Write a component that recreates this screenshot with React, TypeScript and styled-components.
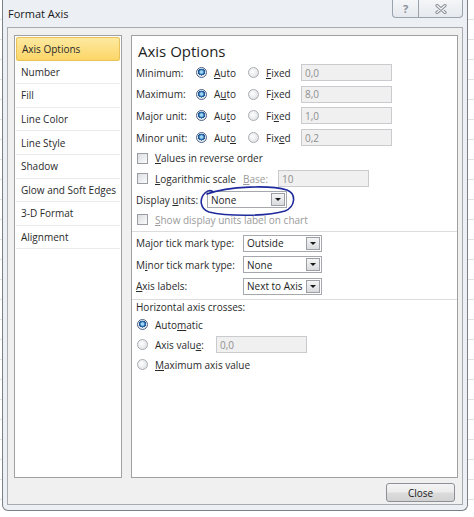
import styled, { createGlobalStyle } from "styled-components";

const GlobalStyle = createGlobalStyle`
  html, body {
    margin: 0;
    padding: 0;
    background: #ffffff;
    font-family: "Open Sans", "Noto Sans", sans-serif;
  }
  #root {
    width: 474px;
    height: 517px;
    overflow: hidden;
    background: repeating-linear-gradient(180deg, #ffffff 0 19px, #dde2e8 19px 20px);
  }
`;

const Dialog = styled.div`
  width: 466px;
  height: 511px;
  margin-left: 2px;
  background: #eceff3;
  border: 1px solid #7a8088;
  border-top: none;
  border-radius: 0 0 6px 6px;
  display: flex;
  flex-direction: column;
  box-sizing: border-box;
  position: relative;
`;

const TitleBar = styled.div`
  height: 27px;
  display: flex;
  align-items: flex-start;
  justify-content: space-between;
  padding-left: 5px;
`;

const Title = styled.span`
  font-size: 11px;
  color: #1a1a1a;
  margin-top: 6px;
`;

const CaptionButtons = styled.div`
  display: flex;
  margin-right: 4px;
  height: 17px;
  border: 1px solid #9aa2ac;
  border-top: none;
  border-radius: 0 0 4px 4px;
  background: linear-gradient(#f4f6f8, #e6e9ee);
`;

const CaptionButton = styled.div<{ $w: number; $last?: boolean }>`
  width: ${({ $w }) => $w}px;
  display: flex;
  align-items: center;
  justify-content: center;
  border-right: ${({ $last }) => ($last ? "none" : "1px solid #9aa2ac")};
  color: #8a8f96;
  font-size: 11px;
  font-weight: 700;
`;

const Client = styled.div`
  flex: 1;
  margin: 0 4px 5px 4px;
  background: #f0f0f0;
  border: 1px solid #a7abb0;
  display: flex;
  flex-direction: column;
  padding: 7px 4px 0 6px;
`;

const Panels = styled.div`
  display: flex;
  gap: 9px;
  height: 443px;
`;

const NavList = styled.div`
  width: 108px;
  background: #ffffff;
  border: 1px solid #a0a0a0;
  box-sizing: border-box;
  padding: 1px;
  display: flex;
  flex-direction: column;
`;

const NavItem = styled.div<{ $selected?: boolean }>`
  height: 23.6px;
  box-sizing: border-box;
  display: flex;
  align-items: center;
  padding-left: 5px;
  font-size: 10px;
  color: #2a2a2a;
  border-bottom: 1px solid ${({ $selected }) => ($selected ? "transparent" : "#ececec")};
  ${({ $selected }) =>
    $selected &&
    `
    background: linear-gradient(#fde9a0, #fcd667);
    border: 1px solid #eac25a;
    border-radius: 2px;
  `}
`;

const OptionsPanel = styled.div`
  width: 327px;
  background: #ffffff;
  border: 1px solid #a0a0a0;
  box-sizing: border-box;
  padding: 4px 0 0 4px;
  display: flex;
  flex-direction: column;
  position: relative;
  font-size: 10px;
  color: #2a2a2a;
`;

const Heading = styled.div`
  font-size: 15px;
  color: #1e1e1e;
  height: 22px;
  padding-left: 2px;
  display: flex;
  align-items: center;
`;

const Row = styled.div<{ $h: number; $indent?: number }>`
  height: ${({ $h }) => $h}px;
  display: flex;
  align-items: center;
  padding-left: ${({ $indent }) => $indent ?? 0}px;
`;

const Label = styled.span<{ $w?: number; $disabled?: boolean }>`
  display: inline-block;
  width: ${({ $w }) => ($w ? `${$w}px` : "auto")};
  flex: none;
  white-space: nowrap;
  color: ${({ $disabled }) => ($disabled ? "#9a9a9a" : "#2a2a2a")};
`;

const Key = styled.span`
  text-decoration: underline;
  text-underline-offset: 1px;
`;

const Radio = styled.span<{ $on?: boolean }>`
  width: 11px;
  height: 11px;
  flex: none;
  border-radius: 50%;
  box-sizing: border-box;
  border: 1px solid ${({ $on }) => ($on ? "#4d6185" : "#a9acb2")};
  background: ${({ $on }) =>
    $on
      ? "radial-gradient(circle at 50% 45%, #9fd4f5 0 1.2px, #2a6fb0 2.4px, #1b4f8c 3.4px, #e9ecf0 3.6px)"
      : "radial-gradient(circle at 40% 40%, #ffffff, #d8dade)"};
  margin-right: 7px;
`;

const Checkbox = styled.span`
  width: 11px;
  height: 11px;
  flex: none;
  box-sizing: border-box;
  border: 1px solid #9a9ea4;
  background: linear-gradient(135deg, #dcdee2, #fbfbfb);
  margin-right: 7px;
`;

const TextBox = styled.div<{ $w: number }>`
  width: ${({ $w }) => $w}px;
  height: 17px;
  box-sizing: border-box;
  border: 1px solid #c9cbce;
  background: #f0f0f0;
  color: #8f8f8f;
  display: flex;
  align-items: center;
  padding-left: 3px;
  flex: none;
`;

const Select = styled.div<{ $w: number }>`
  width: ${({ $w }) => $w}px;
  height: 17px;
  box-sizing: border-box;
  border: 1px solid #a5a8ad;
  background: #ffffff;
  display: flex;
  align-items: stretch;
  flex: none;
`;

const SelectText = styled.span`
  flex: 1;
  display: flex;
  align-items: center;
  padding-left: 3px;
  color: #1e1e1e;
  white-space: nowrap;
`;

const SelectButton = styled.span`
  width: 14px;
  margin: 1px;
  box-sizing: border-box;
  border: 1px solid #9ca0a6;
  background: linear-gradient(#f5f5f5, #d9dbde);
  display: flex;
  align-items: center;
  justify-content: center;
  &::after {
    content: "";
    border-left: 3px solid transparent;
    border-right: 3px solid transparent;
    border-top: 3px solid #1a1a1a;
  }
`;

const Separator = styled.div`
  height: 1px;
  flex: none;
  background: #dcdcdc;
  margin: 2px 0 0 -4px;
`;

const Footer = styled.div`
  flex: 1;
  display: flex;
  justify-content: flex-end;
  align-items: flex-start;
  padding-top: 5px;
  padding-right: 3px;
`;

const CloseButton = styled.div`
  width: 69px;
  height: 19px;
  box-sizing: border-box;
  border: 1px solid #8d9197;
  border-radius: 3px;
  background: linear-gradient(#f4f4f4 0%, #ececec 48%, #dcdcdc 52%, #d2d2d2 100%);
  display: flex;
  align-items: center;
  justify-content: center;
  font-size: 10px;
  color: #1a1a1a;
`;

const Scribble = styled.svg`
  position: absolute;
  left: 67px;
  top: 149px;
  pointer-events: none;
`;

const navItems = [
  "Axis Options",
  "Number",
  "Fill",
  "Line Color",
  "Line Style",
  "Shadow",
  "Glow and Soft Edges",
  "3-D Format",
  "Alignment",
];

const unitRows = [
  { label: "Minimum:", pre: "", key: "A", post: "uto", fpre: "", fkey: "F", fpost: "ixed", value: "0,0" },
  { label: "Maximum:", pre: "A", key: "u", post: "to", fpre: "F", fkey: "i", fpost: "xed", value: "8,0" },
  { label: "Major unit:", pre: "Au", key: "t", post: "o", fpre: "Fi", fkey: "x", fpost: "ed", value: "1,0" },
  { label: "Minor unit:", pre: "Aut", key: "o", post: "", fpre: "Fix", fkey: "e", fpost: "d", value: "0,2" },
];

function CloseGlyph() {
  return (
    <svg width="12" height="10" viewBox="0 0 12 10">
      <path d="M2 1.5 L10 8.5 M10 1.5 L2 8.5" stroke="#8a8f96" strokeWidth="3.2" strokeLinecap="round" />
      <path d="M2 1.5 L10 8.5 M10 1.5 L2 8.5" stroke="#f4f6f8" strokeWidth="1.2" strokeLinecap="round" />
    </svg>
  );
}

export default function App() {
  return (
    <>
      <GlobalStyle />
      <Dialog>
        <TitleBar>
          <Title>Format Axis</Title>
          <CaptionButtons>
            <CaptionButton $w={25}>?</CaptionButton>
            <CaptionButton $w={43} $last>
              <CloseGlyph />
            </CaptionButton>
          </CaptionButtons>
        </TitleBar>
        <Client>
          <Panels>
            <NavList>
              {navItems.map((item, i) => (
                <NavItem key={item} $selected={i === 0}>
                  {item}
                </NavItem>
              ))}
            </NavList>
            <OptionsPanel>
              <Heading>Axis Options</Heading>
              {unitRows.map((r) => (
                <Row key={r.label} $h={21.6}>
                  <Label $w={60}>{r.label}</Label>
                  <Radio $on />
                  <Label $w={34}>
                    {r.pre}
                    <Key>{r.key}</Key>
                    {r.post}
                  </Label>
                  <Radio />
                  <Label $w={35}>
                    {r.fpre}
                    <Key>{r.fkey}</Key>
                    {r.fpost}
                  </Label>
                  <TextBox $w={91}>{r.value}</TextBox>
                </Row>
              ))}
              <Row $h={20} $indent={1}>
                <Checkbox />
                <Label>
                  <Key>V</Key>alues in reverse order
                </Label>
              </Row>
              <Row $h={21} $indent={1}>
                <Checkbox />
                <Label $w={88}>
                  <Key>L</Key>ogarithmic scale
                </Label>
                <Label $w={35} $disabled>
                  <Key>B</Key>ase:
                </Label>
                <TextBox $w={91}>10</TextBox>
              </Row>
              <Row $h={21}>
                <Label $w={71}>
                  Display <Key>u</Key>nits:
                </Label>
                <Select $w={80}>
                  <SelectText>None</SelectText>
                  <SelectButton />
                </Select>
              </Row>
              <Row $h={19} $indent={1}>
                <Checkbox />
                <Label $disabled>
                  <Key>S</Key>how display units label on chart
                </Label>
              </Row>
              <Separator />
              <Row $h={21.5}>
                <Label $w={107}>Major tick mark type:</Label>
                <Select $w={79}>
                  <SelectText>Outside</SelectText>
                  <SelectButton />
                </Select>
              </Row>
              <Row $h={21.5}>
                <Label $w={107}>
                  M<Key>i</Key>nor tick mark type:
                </Label>
                <Select $w={79}>
                  <SelectText>None</SelectText>
                  <SelectButton />
                </Select>
              </Row>
              <Row $h={21.5}>
                <Label $w={107}>
                  <Key>A</Key>xis labels:
                </Label>
                <Select $w={79}>
                  <SelectText>Next to Axis</SelectText>
                  <SelectButton />
                </Select>
              </Row>
              <Separator />
              <Row $h={15}>
                <Label>Horizontal axis crosses:</Label>
              </Row>
              <Row $h={20} $indent={1}>
                <Radio $on />
                <Label>
                  Auto<Key>m</Key>atic
                </Label>
              </Row>
              <Row $h={20} $indent={1}>
                <Radio />
                <Label $w={61}>
                  Axis valu<Key>e</Key>:
                </Label>
                <TextBox $w={91}>0,0</TextBox>
              </Row>
              <Row $h={20} $indent={1}>
                <Radio />
                <Label>
                  <Key>M</Key>aximum axis value
                </Label>
              </Row>
              <Scribble width="98" height="32" viewBox="0 0 98 32">
                <path
                  d="M8 9 C 30 1, 72 0, 88 5 C 98 9, 96 22, 86 26 C 66 32, 26 31, 10 27 C 1 24, 0 14, 6 8 C 8 6, 11 5, 13 6"
                  fill="none"
                  stroke="#1f2a9c"
                  strokeWidth="1.6"
                  strokeLinecap="round"
                />
              </Scribble>
            </OptionsPanel>
          </Panels>
          <Footer>
            <CloseButton>Close</CloseButton>
          </Footer>
        </Client>
      </Dialog>
    </>
  );
}
